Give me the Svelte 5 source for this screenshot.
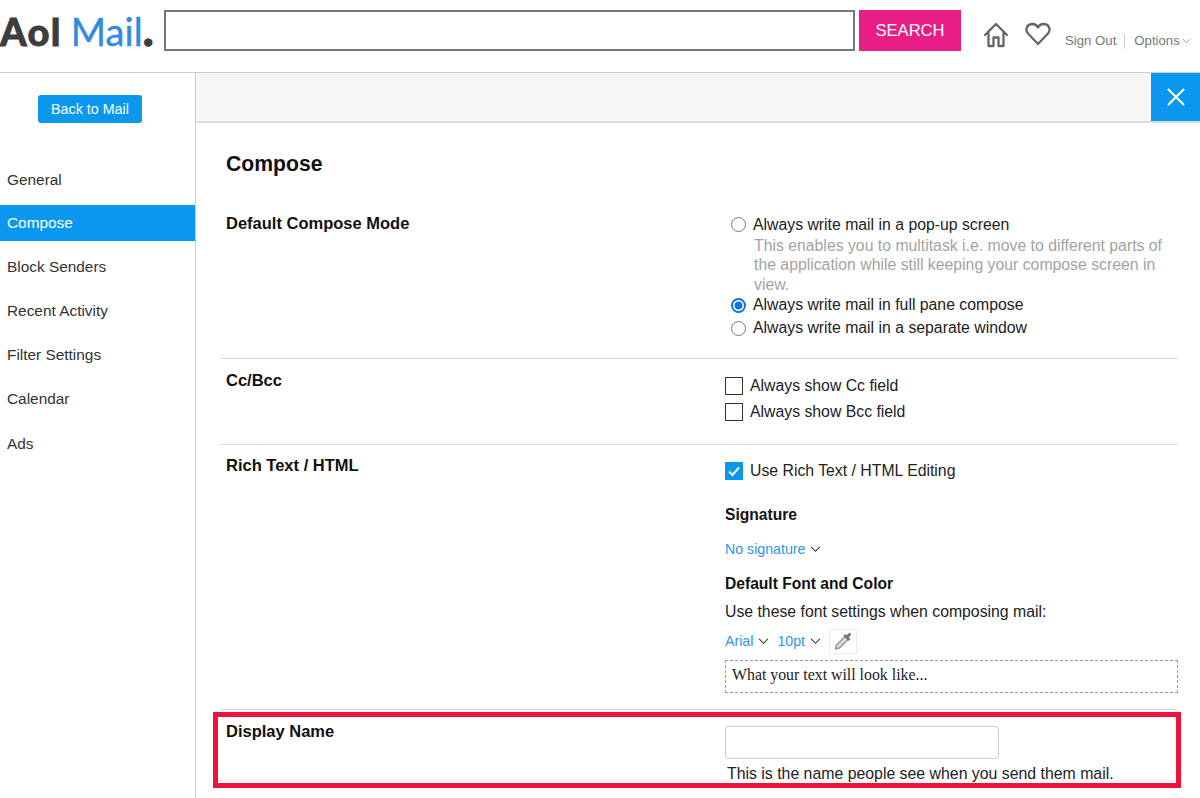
<script lang="ts">
	const navItems = ['General', 'Compose', 'Block Senders', 'Recent Activity', 'Filter Settings', 'Calendar', 'Ads'];
	const composeModes = [
		{ label: 'Always write mail in a pop-up screen', checked: false, hint: 'This enables you to multitask i.e. move to different parts of the application while still keeping your compose screen in view.' },
		{ label: 'Always write mail in full pane compose', checked: true, hint: '' },
		{ label: 'Always write mail in a separate window', checked: false, hint: '' }
	];
</script>

<div class="page">
	<header class="topbar">
		<div class="logo"><span class="aol">Aol</span><span class="mail">Mail</span><span class="dot">.</span></div>
		<div class="search-input"></div>
		<button type="button" class="search-btn">SEARCH</button>
		<svg class="home-icon" viewBox="0 0 26 26" width="26" height="26" fill="none" stroke="#666" stroke-width="2.3" stroke-linejoin="round" stroke-linecap="round">
			<path d="M2 13 L13 2 L24 13" />
			<path d="M5.5 11 V24 H10.5 V15.5 H15.5 V24 H20.5 V11" />
		</svg>
		<svg class="heart-icon" viewBox="0 0 26 24" width="26" height="24" fill="none" stroke="#666" stroke-width="2.3" stroke-linejoin="round">
			<path d="M13 22 L3 11.5 C0 8 1.5 2.5 7 2 C10 1.8 12 3.5 13 5.5 C14 3.5 16 1.8 19 2 C24.5 2.5 26 8 23 11.5 Z" />
		</svg>
		<div class="account">
			<span>Sign Out</span>
			<span class="sep"></span>
			<span>Options</span>
			<svg viewBox="0 0 10 6" width="9" height="6" fill="none" stroke="#888" stroke-width="1"><path d="M1 1 L5 5 L9 1" /></svg>
		</div>
	</header>

	<div class="body">
		<aside class="sidebar">
			<button type="button" class="back-btn">Back to Mail</button>
			<nav class="nav">
				{#each navItems as item}
					<div class="nav-item" class:active={item === 'Compose'}>{item}</div>
				{/each}
			</nav>
		</aside>

		<main class="main">
			<div class="toolbar">
				<button type="button" class="close-btn" aria-label="Close">
					<svg viewBox="0 0 18 18" width="18" height="18" fill="none" stroke="#fff" stroke-width="2"><path d="M1 1 L17 17 M17 1 L1 17" /></svg>
				</button>
			</div>

			<div class="content">
				<h1>Compose</h1>

				<section class="row row-mode">
					<h2>Default Compose Mode</h2>
					<div class="options modes">
						{#each composeModes as mode}
							<div class="radio-row">
								<span class="radio" class:on={mode.checked}></span>
								<span>{mode.label}</span>
							</div>
							{#if mode.hint}
								<p class="hint">{mode.hint}</p>
							{/if}
						{/each}
					</div>
				</section>

				<section class="row row-cc">
					<h2>Cc/Bcc</h2>
					<div class="options cc-options">
						<div class="check-row"><span class="check"></span><span>Always show Cc field</span></div>
						<div class="check-row"><span class="check"></span><span>Always show Bcc field</span></div>
					</div>
				</section>

				<section class="row row-rich">
					<h2>Rich Text / HTML</h2>
					<div class="options rich-options">
						<div class="check-row">
							<span class="check on">
								<svg viewBox="0 0 18 18" width="18" height="18" fill="none" stroke="#fff" stroke-width="2"><path d="M4 9.5 L7.5 13 L14 5.5" /></svg>
							</span>
							<span>Use Rich Text / HTML Editing</span>
						</div>
						<h3 class="signature">Signature</h3>
						<div class="picker sig-picker">
							<span class="link">No signature</span>
							<svg viewBox="0 0 12 8" width="11" height="7" fill="none" stroke="#333" stroke-width="1.2"><path d="M1 1 L6 6 L11 1" /></svg>
						</div>
						<h3 class="font-title">Default Font and Color</h3>
						<p class="font-copy">Use these font settings when composing mail:</p>
						<div class="picker font-picker">
							<span class="link">Arial</span>
							<svg viewBox="0 0 12 8" width="11" height="7" fill="none" stroke="#333" stroke-width="1.2"><path d="M1 1 L6 6 L11 1" /></svg>
							<span class="link size">10pt</span>
							<svg viewBox="0 0 12 8" width="11" height="7" fill="none" stroke="#333" stroke-width="1.2"><path d="M1 1 L6 6 L11 1" /></svg>
							<span class="color-btn">
								<svg viewBox="0 0 20 20" width="20" height="20" fill="none">
									<path d="M2.5 18 L3.5 14 L12.5 5 L15.5 8 L6.5 17 Z" fill="#ddd" stroke="#999" stroke-width="1.6" stroke-linejoin="round" />
									<path d="M11.5 4 L16.5 9 M14.5 5.5 L17.5 2.5" stroke="#777" stroke-width="2.8" />
								</svg>
							</span>
						</div>
						<div class="preview">What your text will look like...</div>
					</div>
				</section>

				<section class="row row-name">
					<h2>Display Name</h2>
					<div class="options">
						<div class="name-input"></div>
						<p class="name-copy">This is the name people see when you send them mail.</p>
					</div>
				</section>
			</div>
		</main>
	</div>

	<div class="highlight"></div>
</div>

<style>
	:global(body) {
		margin: 0;
		background: #fff;
		font-family: "Liberation Sans", Arial, sans-serif;
		color: #222;
	}

	.page {
		position: relative;
		width: 1200px;
		height: 798px;
		overflow: hidden;
	}

	.topbar {
		display: flex;
		align-items: flex-start;
		height: 72px;
		border-bottom: 1px solid #ccc;
	}
	.logo {
		display: flex;
		align-items: baseline;
		width: 164px;
		margin-top: 2px;
		font-family: Lato, sans-serif;
		font-size: 38px;
		line-height: 46px;
		white-space: nowrap;
		flex: none;
	}
	.aol {
		font-weight: 900;
		color: #3d3d3d;
		letter-spacing: 1.3px;
		-webkit-text-stroke: 0.8px #3d3d3d;
	}
	.mail {
		margin-left: 9px;
		color: #2f8ae0;
		letter-spacing: 0.1px;
		-webkit-text-stroke: 0.4px #2f8ae0;
	}
	.dot {
		font-size: 46px;
		line-height: 54px;
		font-weight: 700;
		color: #3d3d3d;
		-webkit-text-stroke: 1.5px #3d3d3d;
	}
	.search-input {
		width: 691px;
		height: 41px;
		margin-top: 10px;
		border: 2px solid #777;
		box-sizing: border-box;
		flex: none;
	}
	.search-btn {
		width: 102px;
		height: 41px;
		margin: 10px 0 0 4px;
		padding: 0;
		border: 0;
		background: #e91e84;
		color: #fff;
		font: 16.6px "Liberation Sans", sans-serif;
		flex: none;
	}
	.home-icon { margin: 22px 0 0 22px; flex: none; }
	.heart-icon { margin: 22px 0 0 16px; flex: none; }
	.account {
		display: flex;
		align-items: center;
		margin: 33px 0 0 14px;
		font-size: 13.2px;
		line-height: 16px;
		color: #777;
		white-space: nowrap;
	}
	.account svg { margin-left: 2px; }
	.sep {
		width: 1px;
		height: 15px;
		background: #ccc;
		margin: 0 9px 0 8px;
	}

	.body { display: flex; height: 725px; }

	.sidebar {
		width: 195px;
		border-right: 1px solid #ccc;
		flex: none;
	}
	.back-btn {
		display: block;
		width: 104px;
		height: 28px;
		margin: 22px 0 0 38px;
		padding: 0;
		border: 0;
		border-radius: 3px;
		background: #0a98ef;
		color: #fff;
		font: 14.3px "Liberation Sans", sans-serif;
	}
	.nav { margin-top: 39px; }
	.nav-item {
		height: 36px;
		margin-bottom: 8.1px;
		padding-left: 7px;
		font-size: 15.4px;
		line-height: 36px;
		color: #333;
	}
	.nav-item:first-child { margin-bottom: 7.1px; }
	.nav-item.active { background: #0a98ef; color: #fff; }

	.main { flex: 1; min-width: 0; }
	.toolbar {
		display: flex;
		justify-content: flex-end;
		height: 48px;
		background: #f6f6f6;
		border-bottom: 2px solid #ddd;
	}
	.close-btn {
		display: flex;
		align-items: center;
		justify-content: center;
		width: 49px;
		height: 48px;
		padding: 0;
		border: 0;
		background: #0a98ef;
	}

	.content { padding: 0 22px 0 24px; }
	h1 {
		margin: 0;
		padding: 28px 0 0 6px;
		font-size: 21.2px;
		line-height: 26px;
		font-weight: 700;
		color: #111;
	}
	.row {
		display: grid;
		grid-template-columns: 499px 1fr;
		padding-left: 6px;
		border-bottom: 1px solid #ddd;
	}
	h2 {
		margin: 0;
		font-size: 16.5px;
		line-height: 20px;
		font-weight: 700;
		color: #111;
	}
	.row-mode { height: 172px; padding-top: 26px; box-sizing: border-box; margin-top: 10px; }
	.row-cc { height: 86px; padding-top: 11px; box-sizing: border-box; }
	.row-rich { height: 265px; padding-top: 10px; box-sizing: border-box; }
	.row-name { border: 0; padding-top: 11px; }

	.options { font-size: 15.8px; color: #222; }
	.modes { padding-left: 6px; }
	.cc-options { padding-top: 3px; }
	.rich-options { padding-top: 3px; }
	.radio-row {
		display: flex;
		align-items: center;
		gap: 7px;
		height: 23px;
	}
	.radio {
		width: 15px;
		height: 15px;
		border: 1px solid #777;
		border-radius: 50%;
		box-sizing: border-box;
		flex: none;
	}
	.radio.on {
		border: 2px solid #0f76e4;
		background: radial-gradient(circle, #0f76e4 0 3.8px, #fff 4.2px);
	}
	.hint {
		margin: 0 0 0 23px;
		font-size: 15.8px;
		line-height: 19.3px;
		color: #a3a3a3;
	}
	.check-row {
		display: flex;
		align-items: center;
		gap: 7px;
		height: 25px;
		margin-bottom: 1px;
	}
	.check {
		display: block;
		width: 18px;
		height: 18px;
		border: 1px solid #333;
		box-sizing: border-box;
		flex: none;
	}
	.check.on { border: 0; background: #0a98ef; }
	.check.on svg { display: block; }
	h3 {
		margin: 0;
		font-size: 15.6px;
		line-height: 20px;
		font-weight: 700;
		color: #111;
	}
	.signature { margin-top: 22px; }
	.picker { display: flex; align-items: center; font-size: 14.2px; }
	.picker svg { margin-left: 5px; flex: none; }
	.link { color: #2b96e8; }
	.sig-picker { height: 20px; margin-top: 14px; }
	.font-title { margin-top: 15px; }
	.font-copy { margin: 8px 0 0; line-height: 20px; }
	.font-picker { height: 26px; margin-top: 6px; }
	.size { margin-left: 8px; }
	.color-btn {
		display: flex;
		align-items: center;
		justify-content: center;
		width: 28px;
		height: 25px;
		margin-left: 8px;
		border: 1px solid #eee;
		box-sizing: border-box;
	}
	.color-btn svg { margin: 0; }
	.preview {
		height: 33px;
		margin-top: 6px;
		padding-left: 6px;
		border: 1px dashed #999;
		box-sizing: border-box;
		font-family: "Liberation Serif", serif;
		font-size: 15.85px;
		line-height: 28px;
		color: #222;
	}
	.name-input {
		width: 274px;
		height: 33px;
		margin-top: 5px;
		border: 1px solid #ccc;
		border-radius: 3px;
		box-sizing: border-box;
	}
	.name-copy { margin: 5px 0 0 2px; font-size: 15.85px; line-height: 20px; }

	/* red annotation drawn over the screenshot */
	.highlight {
		position: absolute;
		left: 213px;
		top: 712px;
		width: 968px;
		height: 76px;
		border: 5px solid #f0123c;
		box-sizing: border-box;
	}
</style>
